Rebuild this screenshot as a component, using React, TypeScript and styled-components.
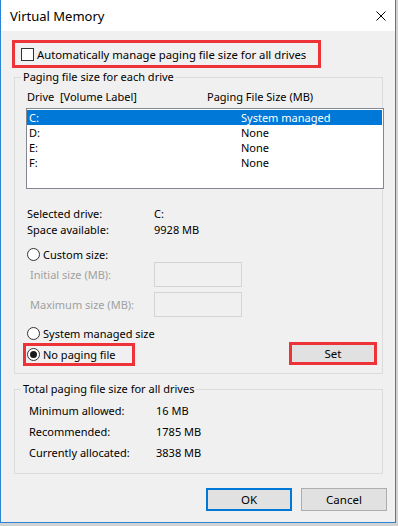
import React from "react";
import styled, { createGlobalStyle } from "styled-components";

const GlobalStyle = createGlobalStyle`
  html, body {
    margin: 0;
    padding: 0;
  }
  body {
    background: #d2d2d2;
    font-family: "Noto Sans", "Segoe UI", sans-serif;
    font-size: 11px;
    color: #000;
  }
`;

const Window = styled.div`
  width: 396px;
  height: 523px;
  box-sizing: border-box;
  border: 1px solid #2a85d6;
  border-top: none;
  background: #f0f0f0;
  display: flex;
  flex-direction: column;
`;

const TitleBar = styled.div`
  height: 31px;
  flex-shrink: 0;
  background: #fff;
  display: flex;
  align-items: center;
  justify-content: space-between;
  padding: 0 9px;
`;

const Title = styled.span`
  font-size: 13px;
  line-height: 16px;
`;

const Body = styled.div`
  flex: 1;
  display: flex;
  flex-direction: column;
  align-items: flex-start;
`;

const Highlight = styled.div<{ $w: number; $h: number }>`
  box-sizing: border-box;
  width: ${(p) => p.$w}px;
  height: ${(p) => p.$h}px;
  border: 3px solid #ee3338;
  display: flex;
  align-items: center;
  white-space: nowrap;
`;

const AutoManage = styled(Highlight)`
  margin: 9px 0 0 11px;
  padding-left: 6px;
  font-size: 11.3px;
`;

const Checkbox = styled.span`
  width: 13px;
  height: 13px;
  flex-shrink: 0;
  box-sizing: border-box;
  border: 1px solid #333;
  background: #fff;
  margin-right: 3px;
`;

const Group = styled.fieldset<{ $top: number; $h: number }>`
  box-sizing: border-box;
  margin: ${(p) => p.$top}px 0 0 13px;
  width: 369px;
  height: ${(p) => p.$h}px;
  min-width: 0;
  padding: 0;
  border: 1px solid #dcdcdc;
`;

const Legend = styled.legend`
  margin-left: 6px;
  padding: 0 2px;
  line-height: 16px;
`;

const ColumnHeader = styled.div`
  display: grid;
  grid-template-columns: 180px auto;
  margin: 4px 0 0 12px;
  line-height: 15px;
`;

const DriveList = styled.div`
  box-sizing: border-box;
  margin: 4px 0 0 11px;
  width: 358px;
  height: 81px;
  border: 1px solid #828790;
  background: #fff;
  padding: 1px 1px 0 0;
`;

const DriveRow = styled.div<{ $selected?: boolean }>`
  display: grid;
  grid-template-columns: 212px auto;
  height: 15px;
  line-height: 15px;
  padding-left: 2px;
  background: ${(p) => (p.$selected ? "#0078d7" : "transparent")};
  color: ${(p) => (p.$selected ? "#fff" : "#000")};
`;

const InfoGrid = styled.div<{ $top: number; $left: number; $row: number }>`
  display: grid;
  grid-template-columns: 127px auto;
  grid-auto-rows: ${(p) => p.$row}px;
  align-items: center;
  margin: ${(p) => p.$top}px 0 0 ${(p) => p.$left}px;
`;

const RadioOption = styled.div<{ $top: number }>`
  display: flex;
  align-items: center;
  height: 16px;
  margin: ${(p) => p.$top}px 0 0 12px;
`;

const Radio = styled.span<{ $checked?: boolean }>`
  width: 13px;
  height: 13px;
  flex-shrink: 0;
  box-sizing: border-box;
  border-radius: 50%;
  border: 1px solid #333;
  background: #fff;
  margin-right: 3px;
  display: flex;
  align-items: center;
  justify-content: center;

  &::after {
    content: "";
    width: 7px;
    height: 7px;
    border-radius: 50%;
    background: #1a1a1a;
    display: ${(p) => (p.$checked ? "block" : "none")};
  }
`;

const SizeField = styled.div<{ $top: number }>`
  display: grid;
  grid-template-columns: 124px 88px;
  align-items: center;
  margin: ${(p) => p.$top}px 0 0 15px;
  color: #a0a0a0;
`;

const SizeInput = styled.div`
  height: 25px;
  box-sizing: border-box;
  border: 1px solid #d4d4d4;
  background: #f0f0f0;
`;

const ActionRow = styled.div`
  display: flex;
  justify-content: space-between;
  align-items: flex-start;
  margin-top: 1px;
  padding: 0 5px 0 8px;
`;

const NoPaging = styled(Highlight)`
  margin-top: 1px;
  padding-left: 1px;
`;

const SetButton = styled.button`
  width: 100%;
  height: 100%;
  border: none;
  background: #e1e1e1;
  font: inherit;
  font-size: 11.5px;
  color: #000;
  padding: 0;
`;

const ButtonRow = styled.div`
  align-self: stretch;
  display: flex;
  justify-content: flex-end;
  gap: 9px;
  margin: 14px 8px 0 0;
`;

const DialogButton = styled.button<{ $primary?: boolean }>`
  width: 86px;
  height: 23px;
  box-sizing: border-box;
  background: #e1e1e1;
  border: ${(p) => (p.$primary ? "2px solid #0078d7" : "1px solid #adadad")};
  font: inherit;
  font-size: 11.5px;
  color: #000;
  padding: 0;
`;

const drives = [
  { letter: "C:", size: "System managed" },
  { letter: "D:", size: "None" },
  { letter: "E:", size: "None" },
  { letter: "F:", size: "None" },
];

export default function App() {
  return (
    <>
      <GlobalStyle />
      <Window>
        <TitleBar>
          <Title>Virtual Memory</Title>
          <svg width="10" height="10" viewBox="0 0 10 10">
            <path d="M0.5 0.5 L9.5 9.5 M9.5 0.5 L0.5 9.5" stroke="#000" strokeWidth="1" />
          </svg>
        </TitleBar>
        <Body>
          <AutoManage $w={309} $h={28}>
            <Checkbox />
            Automatically manage paging file size for all drives
          </AutoManage>

          <Group $top={1} $h={305}>
            <Legend>Paging file size for each drive</Legend>
            <ColumnHeader>
              <span>Drive&nbsp;&nbsp;[Volume Label]</span>
              <span>Paging File Size (MB)</span>
            </ColumnHeader>
            <DriveList>
              {drives.map((d, i) => (
                <DriveRow key={d.letter} $selected={i === 0}>
                  <span>{d.letter}</span>
                  <span>{d.size}</span>
                </DriveRow>
              ))}
            </DriveList>

            <InfoGrid $top={16} $left={12} $row={16}>
              <span>Selected drive:</span>
              <span>C:</span>
              <span>Space available:</span>
              <span>9928 MB</span>
            </InfoGrid>

            <RadioOption $top={9}>
              <Radio />
              Custom size:
            </RadioOption>
            <SizeField $top={0}>
              <span>Initial size (MB):</span>
              <SizeInput />
            </SizeField>
            <SizeField $top={5}>
              <span>Maximum size (MB):</span>
              <SizeInput />
            </SizeField>

            <RadioOption $top={8}>
              <Radio />
              System managed size
            </RadioOption>

            <ActionRow>
              <NoPaging $w={112} $h={23}>
                <Radio $checked />
                No paging file
              </NoPaging>
              <Highlight $w={88} $h={23}>
                <SetButton>Set</SetButton>
              </Highlight>
            </ActionRow>
          </Group>

          <Group $top={7} $h={93}>
            <Legend>Total paging file size for all drives</Legend>
            <InfoGrid $top={3} $left={14} $row={21}>
              <span>Minimum allowed:</span>
              <span>16 MB</span>
              <span>Recommended:</span>
              <span>1785 MB</span>
              <span>Currently allocated:</span>
              <span>3838 MB</span>
            </InfoGrid>
          </Group>

          <ButtonRow>
            <DialogButton $primary>OK</DialogButton>
            <DialogButton>Cancel</DialogButton>
          </ButtonRow>
        </Body>
      </Window>
    </>
  );
}
